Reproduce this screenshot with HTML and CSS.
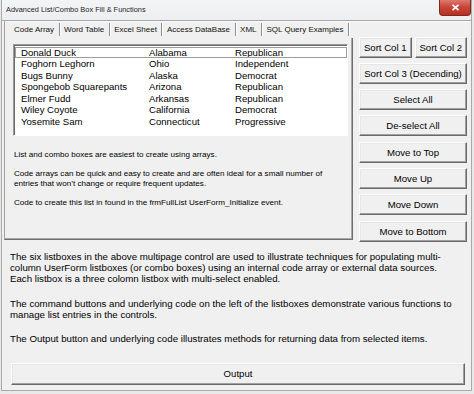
FILE: index.html
```html
<!DOCTYPE html>
<html>
<head>
<meta charset="utf-8">
<link rel="stylesheet" href="styles.css">
</head>
<body>
<div class="window">
  <div class="titlebar">
    <span class="title">Advanced List/Combo Box Fill &amp; Functions</span>
    <span class="close"><svg width="9" height="7" viewBox="0 0 9 7"><path d="M1.5 0.8 L7.5 6.2 M7.5 0.8 L1.5 6.2" stroke="#fff" stroke-width="1.7" fill="none"/></svg></span>
  </div>
  <div class="client">
    <div class="top">
      <div class="multipage">
        <div class="tabstrip">
          <span class="tab active">Code Array</span>
          <span class="tab">Word Table</span>
          <span class="tab">Excel Sheet</span>
          <span class="tab">Access DataBase</span>
          <span class="tab">XML</span>
          <span class="tab">SQL Query Examples</span>
        </div>
        <div class="page">
          <div class="listbox">
            <div class="row focus"><span>Donald Duck</span><span>Alabama</span><span>Republican</span></div>
            <div class="row"><span>Foghorn Leghorn</span><span>Ohio</span><span>Independent</span></div>
            <div class="row"><span>Bugs Bunny</span><span>Alaska</span><span>Democrat</span></div>
            <div class="row"><span>Spongebob Squarepants</span><span>Arizona</span><span>Republican</span></div>
            <div class="row"><span>Elmer Fudd</span><span>Arkansas</span><span>Republican</span></div>
            <div class="row"><span>Wiley Coyote</span><span>California</span><span>Democrat</span></div>
            <div class="row"><span>Yosemite Sam</span><span>Connecticut</span><span>Progressive</span></div>
          </div>
          <div class="pagetext">
            <p>List and combo boxes are easiest to create using arrays.</p>
            <p>Code arrays can be quick and easy to create and are often ideal for a small number of<br>entries that won’t change or require frequent updates.</p>
            <p>Code to create this list in found in the frmFullList UserForm_Initialize event.</p>
          </div>
        </div>
      </div>
      <div class="buttons">
        <div class="btnrow">
          <div class="btn">Sort Col 1</div>
          <div class="btn">Sort Col 2</div>
        </div>
        <div class="btn">Sort Col 3 (Decending)</div>
        <div class="btn">Select All</div>
        <div class="btn">De-select All</div>
        <div class="btn">Move to Top</div>
        <div class="btn">Move Up</div>
        <div class="btn">Move Down</div>
        <div class="btn">Move to Bottom</div>
      </div>
    </div>
    <div class="info">
      <p>The six listboxes in the above multipage control are used to illustrate techniques for populating multi-<br>column UserForm listboxes (or combo boxes) using an internal code array or external data sources.<br>Each listbox is a three colomn listbox with multi-select enabled.</p>
      <p>The command buttons and underlying code on the left of the listboxes demonstrate various functions to<br>manage list entries in the controls.</p>
      <p>The Output button and underlying code illustrates methods for returning data from selected items.</p>
    </div>
    <div class="btn output">Output</div>
  </div>
</div>
</body>
</html>
```
FILE: styles.css
```css
html, body {
  margin: 0;
  padding: 0;
}
body {
  width: 474px;
  height: 394px;
  background: #e9e9e9;
  font-family: "Liberation Sans", Arial, sans-serif;
  color: #000;
  overflow: hidden;
}
.window {
  box-sizing: border-box;
  margin-left: 1px;
  width: 471px;
  height: 391px;
  background: #f0f0f0;
  border: 1px solid #a9a9a9;
  border-top: 0;
  display: flex;
  flex-direction: column;
}
.titlebar {
  height: 20px;
  display: flex;
  align-items: flex-start;
  background: linear-gradient(#f3f4f6, #eceef0);
}
.title {
  font-size: 7.4px;
  line-height: 20px;
  padding-left: 4px;
  color: #1e1e1e;
  white-space: nowrap;
}
.close {
  margin-left: auto;
  width: 32px;
  height: 16px;
  box-sizing: border-box;
  background: linear-gradient(#dc7b6e, #c9473a 45%, #b8301f);
  border: 1px solid #7a2a22;
  border-top: 0;
  border-radius: 0 0 4px 4px;
  display: flex;
  align-items: center;
  justify-content: center;
}
.client {
  flex: 1;
  border-top: 1px solid #a7a7a7;
  box-shadow: inset 0 1px 0 #fbfbfb;
  padding: 0 0 0 2px;
  display: flex;
  flex-direction: column;
}
.top {
  display: flex;
  align-items: flex-start;
  gap: 6px;
}
.multipage {
  width: 349px;
  display: flex;
  flex-direction: column;
}
.tabstrip {
  height: 17px;
  border-left: 1px solid #a0a0a0;
  display: flex;
  align-items: center;
  padding-left: 5px;
}
.tab {
  font-size: 8px;
  line-height: 13px;
  height: 13px;
  padding: 0 4.5px 0 4px;
  border-right: 1px solid #8e8e8e;
  box-shadow: 1px 0 0 #ffffff;
  white-space: nowrap;
  color: #111;
}
.tab + .tab {
  padding-left: 4.5px;
}
.page {
  box-sizing: border-box;
  height: 202px;
  border-left: 1px solid #a0a0a0;
  border-right: 1px solid #6e6e6e;
  border-bottom: 1px solid #6e6e6e;
  box-shadow: inset -1px -1px 0 #a8a8a8;
  padding: 6px 4px 0 8px;
}
.listbox {
  box-sizing: border-box;
  height: 92px;
  background: #fff;
  border-top: 1px solid #9a9a9a;
  border-left: 1px solid #9a9a9a;
  border-right: 1px solid #ffffff;
  border-bottom: 1px solid #ffffff;
  box-shadow: inset 1px 1px 0 #696969;
  padding-top: 1.5px;
  padding-left: 1px;
}
.row {
  display: grid;
  grid-template-columns: 128px 86px 1fr;
  height: 11.6px;
  line-height: 11.6px;
  font-size: 9.6px;
  padding-left: 6px;
  white-space: nowrap;
}
.row.focus {
  outline: 1px solid #9c9c9c;
  outline-offset: -1px;
}
.pagetext {
  margin-top: 14px;
  font-size: 8.1px;
  line-height: 10px;
  padding-left: 1px;
  white-space: nowrap;
}
.pagetext p {
  margin: 0 0 9px 0;
}
.buttons {
  width: 108px;
  margin-top: 15.5px;
  display: flex;
  flex-direction: column;
  gap: 5.3px;
}
.btnrow {
  display: flex;
  gap: 3px;
}
.btnrow .btn {
  flex: 1;
}
.btn {
  box-sizing: border-box;
  height: 21px;
  display: flex;
  align-items: center;
  justify-content: center;
  font-size: 9.6px;
  white-space: nowrap;
  background: #f0f0f0;
  border: 1px solid;
  border-color: #fdfdfd #696969 #696969 #fdfdfd;
  box-shadow: inset -1px -1px 0 #a0a0a0, inset 1px 1px 0 #e6e6e6;
}
.info {
  margin-top: 9.5px;
  padding-left: 6px;
  font-size: 9.7px;
  line-height: 11px;
  white-space: nowrap;
}
.info p {
  margin: 0 0 13.5px 0;
}
.info p:last-child {
  margin-bottom: 0;
}
.output {
  margin: 19px 6px 0 7px;
  height: 21.6px;
}
```
